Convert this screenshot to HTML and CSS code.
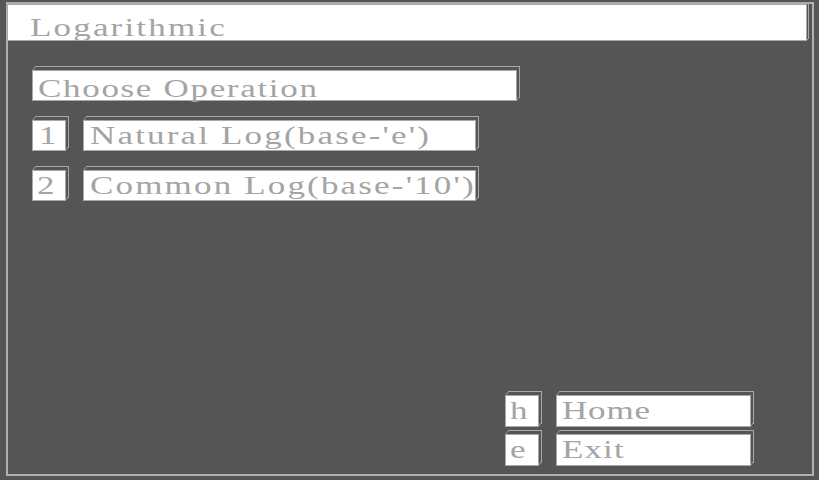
FILE: index.html
```html
<!DOCTYPE html>
<html>
<head>
<meta charset="utf-8">
<link rel="stylesheet" href="styles.css">
</head>
<body>
<div class="screen">
  <div class="blk title"><span class="txt">Logarithmic</span></div>
  <div class="menu">
    <div class="blk choose"><span class="txt t-choose">Choose Operation</span></div>
    <div class="row">
      <div class="blk key key-one"><span class="txt">1</span></div>
      <div class="blk label"><span class="txt">Natural Log(base-'e')</span></div>
    </div>
    <div class="row">
      <div class="blk key"><span class="txt">2</span></div>
      <div class="blk label"><span class="txt">Common Log(base-'10')</span></div>
    </div>
  </div>
  <div class="nav">
    <div class="nrow">
      <div class="blk nkey"><span class="txt">h</span></div>
      <div class="blk nlabel"><span class="txt t-home">Home</span></div>
    </div>
    <div class="nrow">
      <div class="blk nkey"><span class="txt">e</span></div>
      <div class="blk nlabel"><span class="txt t-exit">Exit</span></div>
    </div>
  </div>
</div>
</body>
</html>
```

FILE: styles.css
```css
html, body {
  margin: 0;
  padding: 0;
  background: #555555;
}
body {
  width: 819px;
  height: 480px;
  overflow: hidden;
  font-family: "Liberation Serif", "DejaVu Serif", serif;
  font-size: 25px;
  line-height: 25px;
  color: #a4a4a4;
}
.screen {
  margin: 2px 0 0 6px;
  width: 808px;
  height: 474px;
  box-sizing: border-box;
  border: 2px solid #b0b0b0;
  display: flex;
  flex-direction: column;
}
.blk {
  position: relative;
  box-sizing: border-box;
  background: #ffffff;
  border: 1px solid #a8a8a8;
  white-space: nowrap;
}
.blk::before {
  content: "";
  position: absolute;
  left: 3px;
  top: -5px;
  right: -4px;
  bottom: 2px;
  border-top: 1px solid #a8a8a8;
  border-right: 1px solid #a8a8a8;
  pointer-events: none;
}
.blk::after {
  content: "";
  position: absolute;
  left: -1px;
  top: -5px;
  right: -4px;
  bottom: -1px;
  pointer-events: none;
  background:
    linear-gradient(to bottom right, transparent calc(50% - 0.7px), #a8a8a8 50%, transparent calc(50% + 0.7px)) left top / 4px 5px no-repeat,
    linear-gradient(to bottom right, transparent calc(50% - 0.7px), #a8a8a8 50%, transparent calc(50% + 0.7px)) right bottom / 4px 5px no-repeat;
}
.txt {
  display: inline-block;
  transform: scaleX(1.4);
  transform-origin: left center;
  letter-spacing: 1.55px;
}
.title {
  margin-left: -1px;
  width: 800px;
  height: 37px;
  padding: 10px 0 0 22px;
}
.title::before {
  top: -3px;
  right: -3px;
  left: 2px;
}
.title::after {
  top: -3px;
  right: -3px;
  background-size: 3px 3px;
}
.menu {
  margin: 29px 0 0 24px;
  display: flex;
  flex-direction: column;
  gap: 19px;
}
.choose {
  width: 485px;
  height: 31px;
  padding: 5px 0 0 5px;
}
.row {
  display: flex;
  gap: 17px;
}
.key {
  width: 34px;
  height: 31px;
  padding: 2px 0 0 4px;
}
.key-one {
  padding-left: 6px;
}
.label {
  width: 393px;
  height: 31px;
  padding: 2px 0 0 6px;
}
.nav {
  margin: auto 61px 8px 0;
  align-self: flex-end;
  display: flex;
  flex-direction: column;
  gap: 7px;
}
.nrow {
  display: flex;
  gap: 17px;
}
.nkey {
  width: 34px;
  height: 32px;
  padding: 2px 0 0 4px;
}
.nlabel {
  width: 195px;
  height: 32px;
  padding: 2px 0 0 5px;
}
.t-choose { letter-spacing: 1.2px; }
.t-home { letter-spacing: 0.6px; }
.t-exit { letter-spacing: 0.8px; }
```
